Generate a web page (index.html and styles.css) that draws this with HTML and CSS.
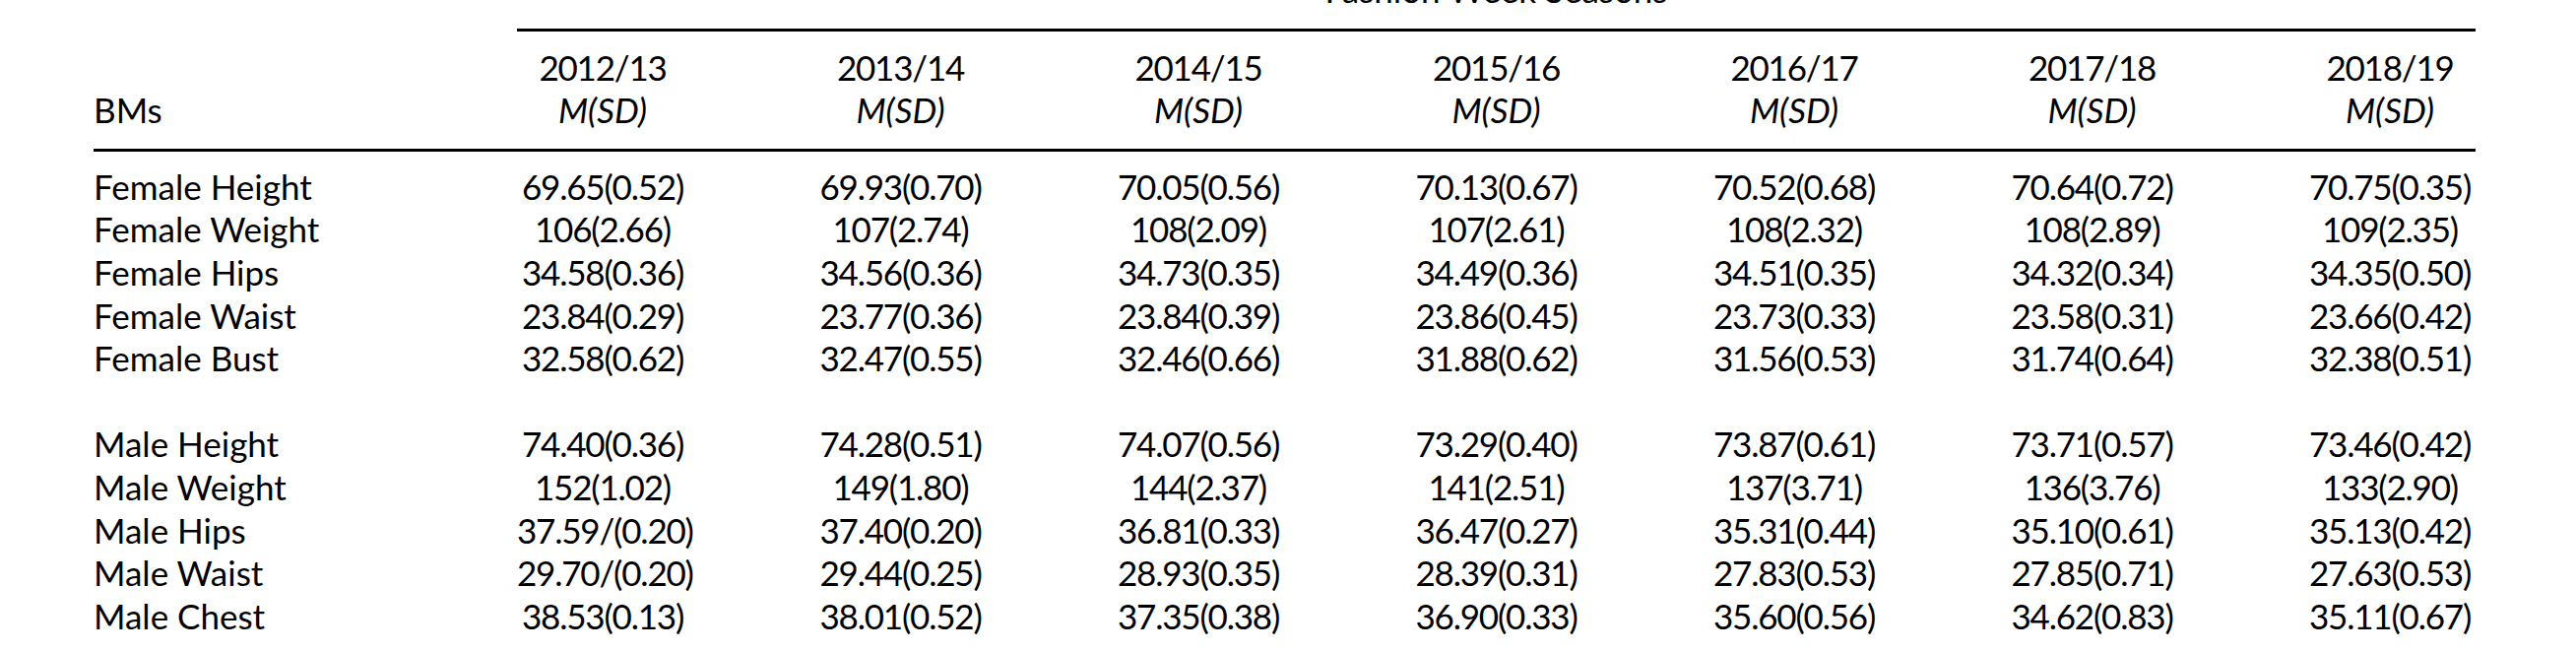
FILE: index.html
```html
<!DOCTYPE html>
<html>
<head>
<meta charset="utf-8">
<link rel="stylesheet" href="styles.css">
</head>
<body>
<div class="page">
  <div class="table">
    <div class="title">Fashion Week Seasons</div>

    <div class="bms">BMs</div>
    <div class="head"><div class="yr">2012/13</div><div class="msd"><i>M(SD)</i></div></div>
    <div class="head"><div class="yr">2013/14</div><div class="msd"><i>M(SD)</i></div></div>
    <div class="head"><div class="yr">2014/15</div><div class="msd"><i>M(SD)</i></div></div>
    <div class="head"><div class="yr">2015/16</div><div class="msd"><i>M(SD)</i></div></div>
    <div class="head"><div class="yr">2016/17</div><div class="msd"><i>M(SD)</i></div></div>
    <div class="head"><div class="yr">2017/18</div><div class="msd"><i>M(SD)</i></div></div>
    <div class="head"><div class="yr">2018/19</div><div class="msd"><i>M(SD)</i></div></div>

    <div class="rule"></div>

    <div class="lab">Female Height</div>
    <div class="num">69.65(0.52)</div><div class="num">69.93(0.70)</div><div class="num">70.05(0.56)</div><div class="num">70.13(0.67)</div><div class="num">70.52(0.68)</div><div class="num">70.64(0.72)</div><div class="num">70.75(0.35)</div>

    <div class="lab">Female Weight</div>
    <div class="num">106(2.66)</div><div class="num">107(2.74)</div><div class="num">108(2.09)</div><div class="num">107(2.61)</div><div class="num">108(2.32)</div><div class="num">108(2.89)</div><div class="num">109(2.35)</div>

    <div class="lab">Female Hips</div>
    <div class="num">34.58(0.36)</div><div class="num">34.56(0.36)</div><div class="num">34.73(0.35)</div><div class="num">34.49(0.36)</div><div class="num">34.51(0.35)</div><div class="num">34.32(0.34)</div><div class="num">34.35(0.50)</div>

    <div class="lab">Female Waist</div>
    <div class="num">23.84(0.29)</div><div class="num">23.77(0.36)</div><div class="num">23.84(0.39)</div><div class="num">23.86(0.45)</div><div class="num">23.73(0.33)</div><div class="num">23.58(0.31)</div><div class="num">23.66(0.42)</div>

    <div class="lab">Female Bust</div>
    <div class="num">32.58(0.62)</div><div class="num">32.47(0.55)</div><div class="num">32.46(0.66)</div><div class="num">31.88(0.62)</div><div class="num">31.56(0.53)</div><div class="num">31.74(0.64)</div><div class="num">32.38(0.51)</div>

    <div class="gap"></div>

    <div class="lab">Male Height</div>
    <div class="num">74.40(0.36)</div><div class="num">74.28(0.51)</div><div class="num">74.07(0.56)</div><div class="num">73.29(0.40)</div><div class="num">73.87(0.61)</div><div class="num">73.71(0.57)</div><div class="num">73.46(0.42)</div>

    <div class="lab">Male Weight</div>
    <div class="num">152(1.02)</div><div class="num">149(1.80)</div><div class="num">144(2.37)</div><div class="num">141(2.51)</div><div class="num">137(3.71)</div><div class="num">136(3.76)</div><div class="num">133(2.90)</div>

    <div class="lab">Male Hips</div>
    <div class="num">37.59/(0.20)</div><div class="num">37.40(0.20)</div><div class="num">36.81(0.33)</div><div class="num">36.47(0.27)</div><div class="num">35.31(0.44)</div><div class="num">35.10(0.61)</div><div class="num">35.13(0.42)</div>

    <div class="lab">Male Waist</div>
    <div class="num">29.70/(0.20)</div><div class="num">29.44(0.25)</div><div class="num">28.93(0.35)</div><div class="num">28.39(0.31)</div><div class="num">27.83(0.53)</div><div class="num">27.85(0.71)</div><div class="num">27.63(0.53)</div>

    <div class="lab">Male Chest</div>
    <div class="num">38.53(0.13)</div><div class="num">38.01(0.52)</div><div class="num">37.35(0.38)</div><div class="num">36.90(0.33)</div><div class="num">35.60(0.56)</div><div class="num">34.62(0.83)</div><div class="num">35.11(0.67)</div>
  </div>
</div>
</body>
</html>
```

FILE: styles.css
```css
html, body {
  margin: 0;
  padding: 0;
  background: #ffffff;
}

body {
  font-family: Lato, "Open Sans", sans-serif;
  font-size: 35px;
  color: #000000;
  overflow: hidden;
}

.page {
  padding-left: 95px;
}

.table {
  display: grid;
  grid-template-columns: 301.5px repeat(7, 174px);
  column-gap: 128.5px;
  margin-top: -32px;
}

.title {
  grid-column: 2 / -1;
  text-align: center;
  line-height: 43.6px;
  padding-bottom: 17px;
  border-bottom: 3px solid #000;
}

.bms {
  grid-column: 1;
  align-self: end;
  line-height: 36px;
  padding-bottom: 22.5px;
}

.head {
  text-align: center;
  padding-top: 18px;
  padding-bottom: 22.5px;
}

.yr {
  line-height: 36px;
  letter-spacing: -1.2px;
}

.msd {
  line-height: 36px;
  padding-top: 7px;
}

.rule {
  grid-column: 1 / -1;
  height: 3px;
  background: #000;
  margin-bottom: 13.7px;
}

.lab {
  grid-column: 1;
  line-height: 43.6px;
  white-space: nowrap;
}

.num {
  text-align: center;
  line-height: 43.6px;
  white-space: nowrap;
  letter-spacing: -1.2px;
}

.gap {
  grid-column: 1 / -1;
  height: 43.6px;
}
```
